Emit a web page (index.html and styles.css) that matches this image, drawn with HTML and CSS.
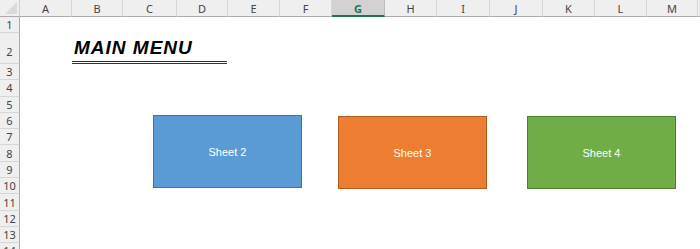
FILE: index.html
```html
<!DOCTYPE html>
<html>
<head>
<meta charset="utf-8">
<link rel="stylesheet" href="styles.css">
</head>
<body>
<div class="sheet">
  <div class="corner"><span class="tri"></span></div>
  <div class="ch">A</div><div class="ch">B</div><div class="ch">C</div><div class="ch">D</div><div class="ch">E</div><div class="ch">F</div><div class="ch sel">G</div><div class="ch">H</div><div class="ch">I</div><div class="ch">J</div><div class="ch">K</div><div class="ch">L</div><div class="ch">M</div><div class="ch">N</div>

  <div class="rh r1">1</div>
  <div class="rh r2">2</div>
  <div class="rh r3">3</div>
  <div class="rh r4">4</div>
  <div class="rh r5">5</div>
  <div class="rh r6">6</div>
  <div class="rh r7">7</div>
  <div class="rh r8">8</div>
  <div class="rh r9">9</div>
  <div class="rh r10">10</div>
  <div class="rh r11">11</div>
  <div class="rh r12">12</div>
  <div class="rh r13">13</div>
  <div class="rh r14">14</div>

  <div class="title">MAIN MENU</div>

  <div class="btn blue">Sheet 2</div>
  <div class="btn orange">Sheet 3</div>
  <div class="btn green">Sheet 4</div>
</div>
</body>
</html>
```

FILE: styles.css
```css
html, body {
  margin: 0;
  padding: 0;
  background: #ffffff;
  overflow: hidden;
}
.sheet {
  position: relative;
  width: 700px;
  height: 249px;
  display: grid;
  grid-template-columns: 20px 52px 51px 54px 51px 52px 52px 53px 52px 53px 53px 52px 52px 51px 20px;
  grid-template-rows: 17px 16px 31px repeat(12, 16.3px);
  font-family: "Noto Sans", "Open Sans", sans-serif;
  overflow: hidden;
}
.corner {
  grid-column: 1;
  grid-row: 1;
  background: #efefef;
  border-right: 1px solid #cfcfcf;
  border-bottom: 1px solid #ababab;
  box-sizing: border-box;
  position: relative;
}
.tri {
  position: absolute;
  right: 2px;
  bottom: 2px;
  width: 0;
  height: 0;
  border-left: 12px solid transparent;
  border-bottom: 12px solid #dadada;
}
.ch {
  grid-row: 1;
  background: #efefef;
  border-right: 1px solid #d6d6d6;
  border-bottom: 1px solid #ababab;
  box-sizing: border-box;
  color: #444444;
  font-size: 11px;
  display: flex;
  align-items: center;
  justify-content: center;
  padding-top: 1px;
}
.ch.sel {
  background: #d2d2d2;
  color: #217346;
  font-weight: bold;
  border-bottom: 2px solid #217346;
  border-right: 1px solid #bcbcbc;
}
.rh {
  grid-column: 1;
  background: #efefef;
  border-right: 1px solid #ababab;
  border-bottom: 1px solid #d6d6d6;
  box-sizing: border-box;
  color: #444444;
  font-size: 11px;
  display: flex;
  align-items: center;
  justify-content: center;
}
.r1 { grid-row: 2; }
.r2 { grid-row: 3; padding-top: 6px; }
.r3 { grid-row: 4; }
.r4 { grid-row: 5; }
.r5 { grid-row: 6; }
.r6 { grid-row: 7; }
.r7 { grid-row: 8; }
.r8 { grid-row: 9; }
.r9 { grid-row: 10; }
.r10 { grid-row: 11; }
.r11 { grid-row: 12; }
.r12 { grid-row: 13; }
.r13 { grid-row: 14; }
.r14 { grid-row: 15; }

.title {
  grid-column: 3 / 6;
  grid-row: 3;
  border-bottom: 3px double #333333;
  box-sizing: border-box;
  font-family: "Liberation Sans", Arial, sans-serif;
  font-weight: bold;
  font-style: italic;
  font-size: 19px;
  letter-spacing: 1px;
  color: #000000;
  line-height: 20px;
  padding-top: 5px;
  padding-left: 2px;
  margin-right: 1px;
}

.btn {
  position: absolute;
  width: 149px;
  height: 73px;
  box-sizing: border-box;
  display: flex;
  align-items: center;
  justify-content: center;
  color: #ffffff;
  font-family: "Liberation Sans", Arial, sans-serif;
  font-size: 11px;
}
.blue {
  left: 153px;
  top: 115px;
  background: #5b9bd5;
  border: 1px solid #41719c;
}
.orange {
  left: 338px;
  top: 116px;
  background: #ed7d31;
  border: 1px solid #ae5a21;
}
.green {
  left: 527px;
  top: 116px;
  background: #70ad47;
  border: 1px solid #507e32;
}
```
